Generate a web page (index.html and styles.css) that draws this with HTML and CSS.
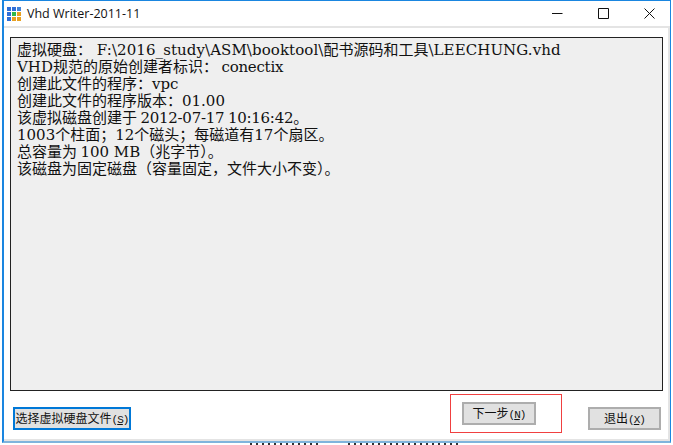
FILE: index.html
```html
<!DOCTYPE html>
<html lang="en">
<head>
  <meta charset="UTF-8">
  <title>Vhd Writer-2011-11</title>
  <link rel="stylesheet" href="styles.css">
</head>
<body>
  <div class="window">
    <div class="titlebar">
      <svg class="app-icon" width="14" height="14" viewBox="0 0 14 14">
        <rect x="0" y="0" width="4" height="4" fill="#2f6fd8"/>
        <rect x="5" y="0" width="4" height="4" fill="#2f6fd8"/>
        <rect x="10" y="0" width="4" height="4" fill="#3f82d8"/>
        <rect x="0" y="5" width="4" height="4" fill="#2f6fd8"/>
        <rect x="5" y="5" width="4" height="4" fill="#2fb84a"/>
        <rect x="10" y="5" width="4" height="4" fill="#e8a020"/>
        <rect x="0" y="10" width="4" height="4" fill="#2f6fd8"/>
        <rect x="5" y="10" width="4" height="4" fill="#e8a020"/>
        <rect x="10" y="10" width="4" height="4" fill="#e8a020"/>
      </svg>
      <span class="title">Vhd Writer-2011-11</span>
      <div class="controls">
        <svg width="11" height="11" viewBox="0 0 11 11"><path d="M0 5.5H10.5" stroke="#111" fill="none"/></svg>
        <svg width="11" height="11" viewBox="0 0 11 11"><path d="M.5 .5H10.5V10.5H.5Z" stroke="#111" fill="none"/></svg>
        <svg width="11" height="11" viewBox="0 0 11 11"><path d="M.5 .5L10.5 10.5M10.5 .5L.5 10.5" stroke="#111" fill="none"/></svg>
      </div>
    </div>
    <div class="client">
      <div class="info">
        <div class="line">虚拟硬盘：<span class="la wide"> F:\2016_study\ASM\booktool\</span>配书源码和工具<span class="la wide">\LEECHUNG.vhd</span></div>
        <div class="line"><span class="la">VHD</span>规范的原始创建者标识：<span class="la tight"> conectix</span></div>
        <div class="line">创建此文件的程序：<span class="la">vpc</span></div>
        <div class="line">创建此文件的程序版本：<span class="la">01.00</span></div>
        <div class="line">该虚拟磁盘创建于 <span class="la tight">2012-07-17 10:16:42</span>。</div>
        <div class="line"><span class="la">1003</span>个柱面；<span class="la">12</span>个磁头；每磁道有<span class="la">17</span>个扇区。</div>
        <div class="line">总容量为 <span class="la">100 MB</span>（兆字节）。</div>
        <div class="line">该磁盘为固定磁盘（容量固定，文件大小不变）。</div>
      </div>
      <div class="actions">
        <button class="btn btn-file">选择虚拟硬盘文件<span class="key">(<u>S</u>)</span></button>
        <div class="highlight">
          <button class="btn btn-next">下一步<span class="key">(<u>N</u>)</span></button>
        </div>
        <button class="btn btn-exit">退出<span class="key">(<u>X</u>)</span></button>
      </div>
    </div>
  </div>
  <!-- bits of the page behind the window -->
  <div class="behind behind-a"></div>
  <div class="behind behind-b"></div>
</body>
</html>
```

FILE: styles.css
```css
html, body {
  margin: 0;
  padding: 0;
  height: 100%;
  background-color: #fff;
  overflow: hidden;
}

.window {
  box-sizing: border-box;
  width: 669px;
  height: 443px;
  margin-left: 2px;
  background-color: #fff;
  border: 1px solid #1a86e0;
  border-left-width: 2px;
  border-bottom: 2px solid #7fb4dc;
  display: flex;
  flex-direction: column;
}

.titlebar {
  height: 25px;
  display: flex;
  align-items: center;
  flex-shrink: 0;
  padding-left: 3px;
}

.app-icon {
  margin-right: 6px;
}

.title {
  font-family: "Open Sans", sans-serif;
  font-size: 12.5px;
  color: #111;
}

.controls {
  margin-left: auto;
  display: flex;
  gap: 35px;
  padding-right: 15px;
}

.client {
  flex: 1;
  border-top: 2px solid #e4e4e4;
  border-right: 2px solid #e4e4e4;
  border-bottom: 2px solid #e4e4e4;
  padding: 9px 5px 0 6px;
  display: flex;
  flex-direction: column;
}

.info {
  box-sizing: border-box;
  height: 354px;
  flex-shrink: 0;
  background-color: #efefef;
  border: 1px solid #222;
  padding: 2px 0 0 6px;
  font-family: "Noto Sans CJK SC", sans-serif;
  font-size: 15px;
  line-height: 17px;
  color: #111;
  white-space: nowrap;
}

.line {
  height: 17px;
}

.la {
  font-family: "DejaVu Serif", "Liberation Serif", serif;
  font-size: 15px;
  line-height: 1;
  white-space: pre;
}

.wide {
  letter-spacing: 0.08px;
}

.tight {
  letter-spacing: -0.25px;
  word-spacing: -1px;
}

.actions {
  position: relative;
  display: flex;
  align-items: center;
  padding: 3px 0 0 3px;
}

.btn {
  box-sizing: border-box;
  height: 23px;
  padding: 0;
  background-color: #e1e1e1;
  border: 2px solid #adadad;
  font-family: "Noto Sans CJK SC", sans-serif;
  font-size: 12px;
  line-height: 17px;
  color: #111;
  white-space: nowrap;
}

.key {
  font-family: "Liberation Mono", monospace;
  font-size: 11px;
  letter-spacing: -1px;
}

.btn-file {
  width: 118px;
  margin-top: 9px;
  border-color: #0078d7;
}

.highlight {
  box-sizing: border-box;
  width: 112px;
  height: 39px;
  margin-left: 319px;
  padding-left: 11px;
  border: 1px solid #f04040;
  display: flex;
  align-items: center;
}

.btn-next {
  width: 74px;
}

.btn-exit {
  width: 73px;
  margin-left: 26px;
  margin-top: 9px;
}

.behind {
  position: absolute;
  top: 443px;
  height: 2px;
  background: repeating-linear-gradient(90deg, #333 0, #333 2px, #fff 2px, #fff 6px);
}

.behind-a {
  left: 250px;
  width: 70px;
}

.behind-b {
  left: 348px;
  width: 110px;
}
```
